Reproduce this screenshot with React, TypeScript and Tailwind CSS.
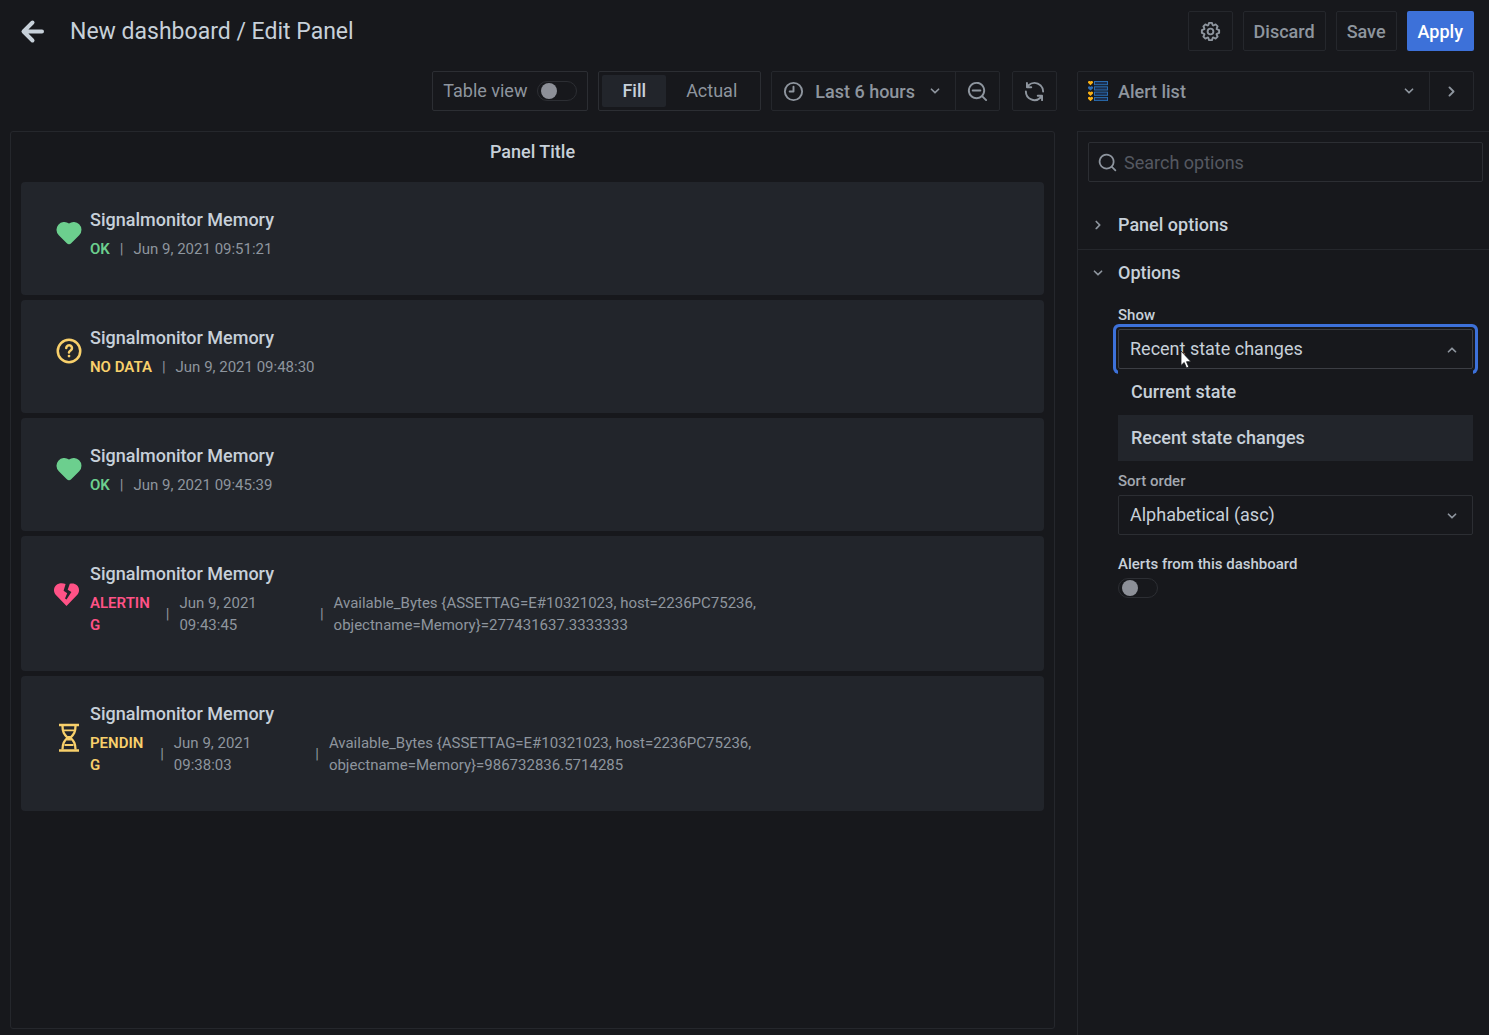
import { useState } from 'react'
import type { ReactNode } from 'react'

type AlertState = 'ok' | 'nodata' | 'alerting' | 'pending'

interface AlertItem {
  id: number
  name: string
  state: AlertState
  time: string
  info?: string
}

const alerts: AlertItem[] = [
  { id: 1, name: 'Signalmonitor Memory', state: 'ok', time: 'Jun 9, 2021 09:51:21' },
  { id: 2, name: 'Signalmonitor Memory', state: 'nodata', time: 'Jun 9, 2021 09:48:30' },
  { id: 3, name: 'Signalmonitor Memory', state: 'ok', time: 'Jun 9, 2021 09:45:39' },
  {
    id: 4,
    name: 'Signalmonitor Memory',
    state: 'alerting',
    time: 'Jun 9, 2021 09:43:45',
    info: 'Available_Bytes {ASSETTAG=E#10321023, host=2236PC75236, objectname=Memory}=277431637.3333333',
  },
  {
    id: 5,
    name: 'Signalmonitor Memory',
    state: 'pending',
    time: 'Jun 9, 2021 09:38:03',
    info: 'Available_Bytes {ASSETTAG=E#10321023, host=2236PC75236, objectname=Memory}=986732836.5714285',
  },
]

const stateText: Record<AlertState, string> = {
  ok: 'OK',
  nodata: 'NO DATA',
  alerting: 'ALERTING',
  pending: 'PENDING',
}

const stateColor: Record<AlertState, string> = {
  ok: 'text-[#6ccf8e]',
  nodata: 'text-[#f8d06b]',
  alerting: 'text-[#ff5286]',
  pending: 'text-[#f8d06b]',
}

const icons = {
  angleDown:
    'M17,9.17a1,1,0,0,0-1.41,0L12,12.71,8.46,9.17a1,1,0,0,0-1.41,0,1,1,0,0,0,0,1.42l4.24,4.24a1,1,0,0,0,1.42,0L17,10.59A1,1,0,0,0,17,9.17Z',
  angleUp:
    'M17,13.41,12.71,9.17a1,1,0,0,0-1.42,0L7.05,13.41a1,1,0,0,0,0,1.42,1,1,0,0,0,1.41,0L12,11.29l3.54,3.54a1,1,0,0,0,.7.29,1,1,0,0,0,.71-.29A1,1,0,0,0,17,13.41Z',
  angleRight:
    'M14.83,11.29,10.59,7.05a1,1,0,0,0-1.42,0,1,1,0,0,0,0,1.41L12.71,12,9.17,15.54a1,1,0,0,0,0,1.41,1,1,0,0,0,.71.29,1,1,0,0,0,.71-.29l4.24-4.24A1,1,0,0,0,14.83,11.29Z',
  search:
    'M21.71,20.29,18,16.61A9,9,0,1,0,16.61,18l3.68,3.68a1,1,0,0,0,1.42,0A1,1,0,0,0,21.71,20.29ZM11,18a7,7,0,1,1,7-7A7,7,0,0,1,11,18Z',
  searchMinus:
    'M21.71,20.29,18,16.61A9,9,0,1,0,16.61,18l3.68,3.68a1,1,0,0,0,1.42,0A1,1,0,0,0,21.71,20.29ZM11,18a7,7,0,1,1,7-7A7,7,0,0,1,11,18ZM15,10H7a1,1,0,0,0,0,2h8a1,1,0,0,0,0-2Z',
  clock:
    'M12,6a1,1,0,0,0-1,1v4H8a1,1,0,0,0,0,2h4a1,1,0,0,0,1-1V7A1,1,0,0,0,12,6Zm0-4A10,10,0,1,0,22,12,10,10,0,0,0,12,2Zm0,18a8,8,0,1,1,8-8A8,8,0,0,1,12,20Z',
  sync: 'M19.91,15.51H15.38a1,1,0,0,0,0,2h2.4A8,8,0,0,1,4,12a1,1,0,1,0-2,0,10,10,0,0,0,16.88,7.23V21a1,1,0,0,0,2,0V16.5A1,1,0,0,0,19.91,15.51ZM12,2A10,10,0,0,0,5.12,4.77V3a1,1,0,0,0-2,0V7.5a1,1,0,0,0,1,1h4.5a1,1,0,0,0,0-2H6.22A8,8,0,0,1,20,12a1,1,0,0,0,2,0A10,10,0,0,0,12,2Z',
  cog: 'M21.32,9.55l-1.89-.63.89-1.78A1,1,0,0,0,20.13,6L18,3.87a1,1,0,0,0-1.15-.19l-1.78.89-.63-1.89A1,1,0,0,0,13.5,2h-3a1,1,0,0,0-.95.68L8.92,4.57,7.14,3.68A1,1,0,0,0,6,3.87L3.87,6a1,1,0,0,0-.19,1.15l.89,1.78-1.89.63A1,1,0,0,0,2,10.5v3a1,1,0,0,0,.68.95l1.89.63-.89,1.78A1,1,0,0,0,3.87,18L6,20.13a1,1,0,0,0,1.15.19l1.78-.89.63,1.89a1,1,0,0,0,.95.68h3a1,1,0,0,0,.95-.68l.63-1.89,1.78.89A1,1,0,0,0,18,20.13L20.13,18a1,1,0,0,0,.19-1.15l-.89-1.78,1.89-.63A1,1,0,0,0,22,13.5v-3A1,1,0,0,0,21.32,9.55ZM20,12.78l-1.2.4A2,2,0,0,0,17.64,16l.57,1.14-1.1,1.1L16,17.64a2,2,0,0,0-2.79,1.16l-.4,1.2H11.22l-.4-1.2A2,2,0,0,0,8,17.64l-1.14.57-1.1-1.1L6.36,16A2,2,0,0,0,5.2,13.18L4,12.78V11.22l1.2-.4A2,2,0,0,0,6.36,8L5.79,6.89l1.1-1.1L8,6.36A2,2,0,0,0,10.82,5.2l.4-1.2h1.56l.4,1.2A2,2,0,0,0,16,6.36l1.14-.57,1.1,1.1L17.64,8a2,2,0,0,0,1.16,2.79l1.2.4ZM12,8a4,4,0,1,0,4,4A4,4,0,0,0,12,8Zm0,6a2,2,0,1,1,2-2A2,2,0,0,1,12,14Z',
  heart:
    'M20.16,5A6.29,6.29,0,0,0,12,4.36a6.27,6.27,0,0,0-8.16,9.48l6.21,6.22a2.78,2.78,0,0,0,3.9,0l6.21-6.22A6.27,6.27,0,0,0,20.16,5Z',
}

function Icon({ name, className }: { name: keyof typeof icons; className: string }) {
  return (
    <svg viewBox="0 0 24 24" fill="currentColor" className={`shrink-0 ${className}`} aria-hidden="true">
      <path d={icons[name]} />
    </svg>
  )
}

function StateIcon({ state }: { state: AlertState }) {
  const cls = `mb-1 size-[30px] shrink-0 ${stateColor[state]}`

  if (state === 'ok') return <Icon name="heart" className={cls} />

  if (state === 'nodata') {
    return (
      <svg viewBox="0 0 24 24" fill="none" stroke="currentColor" className={cls} aria-hidden="true">
        <circle cx="12" cy="12" r="9" strokeWidth="2" />
        <path d="M9.8 9.600a2.300 2.300 0 1 1 3.500 2c-.8.5-1.300.8-1.300 1.500" strokeWidth="2" strokeLinecap="round" />
        <circle cx="12" cy="16" r="1.1" fill="currentColor" stroke="none" />
      </svg>
    )
  }

  if (state === 'alerting') {
    return (
      <svg viewBox="0 0 30 30" fill="currentColor" className={cls} aria-hidden="true">
        <path d="M11.600 1 9.600 7.800l3.600 2.400-2.200 5.400 1.500.9 4.900-7.500-3.700-2.300L15.800.8C18.300.1 20.900.4 22.900 2.200c2.800 2.700 2.800 7 .2 9.700L12.500 23 1.900 11.900C-.7 9.200-.7 4.900 2.100 2.200 4.800-.2 8.600-.2 11.600 1Z" />
      </svg>
    )
  }

  return (
    <svg viewBox="0 0 30 30" fill="none" stroke="currentColor" className={cls} aria-hidden="true">
      <path d="M5 2h20M5 27.500h20" strokeWidth="2.400" />
      <path
        d="M8.500 3c0 6 1.500 8.200 5 11.700C10 18.200 8.500 20.500 8.500 26.500M21.500 3c0 6-1.500 8.200-5 11.700 3.500 3.500 5 5.800 5 11.800"
        strokeWidth="2.300"
      />
      <path d="M9.500 7.300h11M10.500 22h9" strokeWidth="1.800" />
      <path d="M13 13h4l-1 2 1.500 2.500h-5L14 15Z" fill="currentColor" stroke="none" />
    </svg>
  )
}

function AlertListLogo() {
  const rows = ['#f9b115', '#2e6db4', '#f9b115', '#f9b115']
  return (
    <svg viewBox="0 0 20 20" className="size-5 shrink-0" aria-hidden="true">
      {rows.map((color, i) => (
        <g key={i} transform={`translate(0 ${i * 5.3})`}>
          <path d="M2.500 4.300.2 2.100A1.300 1.300 0 0 1 2.500.6 1.300 1.300 0 0 1 4.800 2.100Z" fill={color} />
          <rect x="6.500" y=".5" width="13" height="3.200" fill="#1b2f4f" stroke="#2a6cb0" />
        </g>
      ))}
    </svg>
  )
}

function Switch({ id, checked, onChange }: { id: string; checked: boolean; onChange: (v: boolean) => void }) {
  return (
    <span className="relative inline-flex h-5 w-10 shrink-0">
      <input
        id={id}
        type="checkbox"
        checked={checked}
        onChange={(e) => onChange(e.target.checked)}
        className="peer size-full cursor-pointer appearance-none rounded-full border border-[#2c2e33] checked:bg-[#3d71d9]"
      />
      <span className="pointer-events-none absolute top-[2px] left-1 size-4 rounded-full bg-[#8d9098] peer-checked:left-5" />
    </span>
  )
}

function ToolbarButton({ children, label }: { children: ReactNode; label?: string }) {
  return (
    <button
      type="button"
      aria-label={label}
      className="flex h-10 min-w-11 items-center justify-center rounded-[2px] border border-[#25272c] px-[10px] font-medium hover:bg-[#22252b]"
    >
      {children}
    </button>
  )
}

function AlertCard({ alert }: { alert: AlertItem }) {
  return (
    <li className="flex items-center gap-[6px] rounded-[4px] bg-[#22252b] pt-[27px] pr-[34px] pb-[35px] pl-[33px]">
      <StateIcon state={alert.state} />
      <div className="min-w-0 flex-1">
        <p className="mb-[7px] text-lg leading-[22px] font-medium text-[#c7d0d9]">{alert.name}</p>
        <div className="flex items-center text-[15px] leading-[22px]">
          <span className={`font-semibold break-all ${stateColor[alert.state]}`}>{stateText[alert.state]}</span>
          <span className="mx-[10px]">|</span>
          <span>{alert.time}</span>
          {alert.info && (
            <>
              <span className="mx-[10px]">|</span>
              <span>{alert.info}</span>
            </>
          )}
        </div>
      </div>
    </li>
  )
}

export default function App() {
  const [tableView, setTableView] = useState(false)
  const [display, setDisplay] = useState('Fill')
  const [show, setShow] = useState('Recent state changes')
  const [sortOrder, setSortOrder] = useState('Alphabetical (asc)')
  const [dashboardOnly, setDashboardOnly] = useState(false)

  const showOptions = ['Current state', 'Recent state changes']

  return (
    <div className="flex min-h-screen flex-col bg-[#17181c] font-[Roboto,sans-serif] text-lg leading-[22px] text-[#8e959e]">
      <header className="flex items-center justify-between py-[11px] pr-[15px] pl-[17px]">
        <div className="flex items-center gap-[23px] text-[#c7d0d9]">
          <button type="button" aria-label="Back">
            <svg viewBox="0 0 30 30" fill="none" stroke="currentColor" strokeWidth="4" strokeLinecap="round" strokeLinejoin="round" className="size-[30px]">
              <path d="M15.500 6.500 6.500 15.500l9 9M7.500 15.500H25" />
            </svg>
          </button>
          <h1 className="pt-[2px] text-[23px] leading-[30px]">New dashboard / Edit Panel</h1>
        </div>
        <div className="flex gap-[10px]">
          <ToolbarButton label="Settings">
            <Icon name="cog" className="size-[23px]" />
          </ToolbarButton>
          <ToolbarButton>
            <span className="pt-[2px]">Discard</span>
          </ToolbarButton>
          <ToolbarButton>
            <span className="pt-[2px]">Save</span>
          </ToolbarButton>
          <button type="button" className="h-10 rounded-[2px] bg-[#3d71d9] px-[11px] pt-[2px] font-medium text-white">
            Apply
          </button>
        </div>
      </header>

      <div className="flex flex-1">
        <main className="flex min-w-0 flex-1 flex-col pb-[6px] pl-[10px]">
          <div className="flex justify-end gap-3 py-[9px]">
            <div className="flex gap-[10px]">
              <div className="flex h-10 items-center gap-[10px] rounded-[2px] border border-[#2c2e33] px-[10px]">
                <label htmlFor="table-view">Table view</label>
                <Switch id="table-view" checked={tableView} onChange={setTableView} />
              </div>
              <div className="flex h-10 rounded-[2px] border border-[#2c2e33] p-[3px]">
                {['Fill', 'Actual'].map((mode) => (
                  <button
                    key={mode}
                    type="button"
                    onClick={() => setDisplay(mode)}
                    className={`rounded-[2px] px-5 ${display === mode ? 'bg-[#22252b] font-medium text-[#c7d0d9]' : ''}`}
                  >
                    {mode}
                  </button>
                ))}
              </div>
              <div className="flex h-10 rounded-[2px] border border-[#25272c]">
                <button type="button" className="flex items-center gap-[10px] px-[10px] font-medium">
                  <Icon name="clock" className="size-[23px]" />
                  <span className="pt-[2px]">Last 6 hours</span>
                  <Icon name="angleDown" className="size-5" />
                </button>
                <button type="button" aria-label="Zoom out" className="border-l border-[#25272c] px-[10px]">
                  <Icon name="searchMinus" className="size-[23px]" />
                </button>
              </div>
            </div>
            <ToolbarButton label="Refresh">
              <Icon name="sync" className="size-[23px]" />
            </ToolbarButton>
          </div>

          <section className="mt-[11px] mr-[2px] flex-1 rounded-[3px] border border-[#25272c] px-[10px]">
            <h2 className="pt-[9px] pb-[19px] text-center font-medium text-[#c7d0d9]">Panel Title</h2>
            <ul className="flex flex-col gap-[5px]">
              {alerts.map((alert) => (
                <AlertCard key={alert.id} alert={alert} />
              ))}
            </ul>
          </section>
        </main>

        <aside className="ml-5 flex w-[412px] shrink-0 flex-col">
          <div className="mr-[15px] py-[9px]">
            <div className="flex h-10 rounded-[2px] border border-[#25272c]">
              <button type="button" className="flex flex-1 items-center gap-[10px] px-[10px] font-medium">
                <AlertListLogo />
                <span className="flex-1 pt-[2px] text-left">Alert list</span>
                <Icon name="angleDown" className="size-5" />
              </button>
              <button type="button" aria-label="Close options" className="border-l border-[#25272c] px-[10px]">
                <Icon name="angleRight" className="size-[23px]" />
              </button>
            </div>
          </div>

          <div className="mt-[11px] flex-1 border-t border-l border-[#25272c]">
            <label className="mt-[10px] mr-[6px] ml-[10px] flex h-10 items-center gap-[6px] rounded-[2px] border border-[#2c2e33] px-2">
              <Icon name="search" className="size-[21px]" />
              <input
                type="text"
                aria-label="Search options"
                placeholder="Search options"
                className="min-w-0 flex-1 bg-transparent pt-[2px] outline-none placeholder:text-[#555861]"
              />
            </label>

            <button
              type="button"
              className="mt-[19px] flex h-[49px] w-full items-center gap-[10px] border-b border-[#25272c] pl-[10px] font-medium text-[#c7d0d9]"
            >
              <Icon name="angleRight" className="size-5 text-[#8e959e]" />
              Panel options
            </button>
            <button type="button" className="flex h-[46px] w-full items-center gap-[10px] pl-[10px] font-medium text-[#c7d0d9]">
              <Icon name="angleDown" className="size-5 text-[#8e959e]" />
              Options
            </button>

            <div className="mt-[9px] mr-4 ml-10">
              <label htmlFor="show" className="block text-[15px] leading-5 font-medium text-[#c7d0d9]">
                Show
              </label>
              <div className="relative mt-1">
                <select
                  id="show"
                  value={show}
                  onChange={(e) => setShow(e.target.value)}
                  className="h-10 w-full appearance-none rounded-[2px] border border-[#3c3e44] bg-[#17181c] pr-9 pl-[11px] text-[#c7d0d9] shadow-[0_0_0_2px_#17181c,0_0_0_5px_#3d71d9] outline-none"
                >
                  {showOptions.map((o) => (
                    <option key={o}>{o}</option>
                  ))}
                </select>
                <Icon name="angleUp" className="pointer-events-none absolute top-[11px] right-[11px] size-5" />
                <svg viewBox="0 0 12 19" className="pointer-events-none absolute top-[21px] left-[62px] z-20 h-[19px] w-3" aria-hidden="true">
                  <path d="M1 1v14.500l3.200-3 2.300 5.500 2.300-1-2.300-5.300H11Z" fill="#fff" stroke="#17181c" strokeWidth=".8" />
                </svg>
              </div>
              <ul className="relative z-10 bg-[#17181c] font-medium text-[#c7d0d9]">
                {showOptions.map((o) => (
                  <li key={o}>
                    <button
                      type="button"
                      onClick={() => setShow(o)}
                      className={`h-[46px] w-full px-[13px] text-left ${show === o ? 'bg-[#22252b]' : ''}`}
                    >
                      {o}
                    </button>
                  </li>
                ))}
              </ul>

              <label htmlFor="sort-order" className="mt-[10px] block text-[15px] leading-5 font-medium text-[#a3a8b0]">
                Sort order
              </label>
              <div className="relative mt-1">
                <select
                  id="sort-order"
                  value={sortOrder}
                  onChange={(e) => setSortOrder(e.target.value)}
                  className="h-10 w-full appearance-none rounded-[2px] border border-[#2c2e33] bg-[#17181c] pr-9 pl-[11px] text-[#c7d0d9]"
                >
                  <option>Alphabetical (asc)</option>
                  <option>Alphabetical (desc)</option>
                  <option>Importance</option>
                </select>
                <Icon name="angleDown" className="pointer-events-none absolute top-[11px] right-[11px] size-5" />
              </div>

              <label htmlFor="dashboard-only" className="mt-[19px] mb-1 block text-[15px] leading-5 font-medium text-[#c7d0d9]">
                Alerts from this dashboard
              </label>
              <Switch id="dashboard-only" checked={dashboardOnly} onChange={setDashboardOnly} />
            </div>
          </div>
        </aside>
      </div>
    </div>
  )
}
